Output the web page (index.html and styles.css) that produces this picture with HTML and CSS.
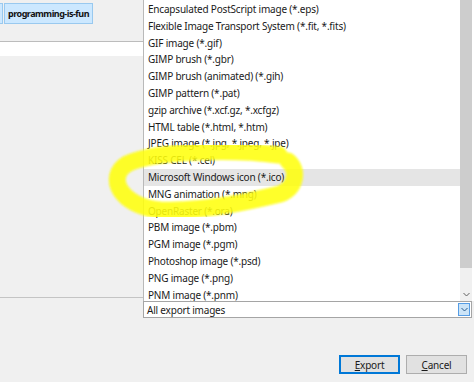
FILE: index.html
```html
<!DOCTYPE html>
<html lang="en">
<head>
  <meta charset="UTF-8" />
  <title>Export Image</title>
  <link rel="stylesheet" href="styles.css">
</head>
<body>
  <div class="dialog">
    <div class="main">

      <!-- folder path + file list (mostly hidden under the popup) -->
      <aside class="left">
        <div class="pathbar">
          <span class="crumb crumb-cut"></span>
          <span class="crumb">programming-is-fun</span>
        </div>
        <div class="file-head"></div>
        <div class="file-area"></div>
      </aside>

      <!-- file type popup -->
      <div class="chooser">
        <div class="popup">
          <ul class="types">
            <li>Encapsulated PostScript image (*.eps)</li>
            <li>Flexible Image Transport System (*.fit, *.fits)</li>
            <li>GIF image (*.gif)</li>
            <li>GIMP brush (*.gbr)</li>
            <li>GIMP brush (animated) (*.gih)</li>
            <li>GIMP pattern (*.pat)</li>
            <li>gzip archive (*.xcf.gz, *.xcfgz)</li>
            <li>HTML table (*.html, *.htm)</li>
            <li>JPEG image (*.jpg, *.jpeg, *.jpe)</li>
            <li>KISS CEL (*.cel)</li>
            <li class="hover">Microsoft Windows icon (*.ico)</li>
            <li>MNG animation (*.mng)</li>
            <li>OpenRaster (*.ora)</li>
            <li>PBM image (*.pbm)</li>
            <li>PGM image (*.pgm)</li>
            <li>Photoshop image (*.psd)</li>
            <li>PNG image (*.png)</li>
            <li>PNM image (*.pnm)</li>
          </ul>
          <div class="scrollbar">
            <div class="thumb"></div>
            <div class="arrow">
              <svg width="7" height="5" viewBox="0 0 7 5"><path d="M0.5 1 L3.5 4 L6.5 1" fill="none" stroke="#606060" stroke-width="1"/></svg>
            </div>
          </div>
        </div>
        <div class="combo">
          <span class="combo-text">All export images</span>
          <span class="combo-btn">
            <svg width="7" height="5" viewBox="0 0 7 5"><path d="M0.5 1 L3.5 4 L6.5 1" fill="none" stroke="#2a5a8a" stroke-width="1"/></svg>
          </span>
        </div>
      </div>
    </div>

    <div class="actions">
      <button class="btn btn-default"><u>E</u>xport</button>
      <button class="btn"><u>C</u>ancel</button>
    </div>

    <!-- yellow marker scribble drawn over the screenshot -->
    <svg class="marker" width="474" height="382" viewBox="0 0 474 382">
      <defs>
        <filter id="soft"><feGaussianBlur stdDeviation="1.3"/></filter>
      </defs>
      <path d="M279 155 C225 148, 150 152, 127 164 C106 177, 120 206, 160 210 C205 212, 255 200, 280 194 C296 188, 299 170, 288 161"
            fill="none" stroke="#ffff0a" stroke-width="17" stroke-linecap="round" opacity="0.88" filter="url(#soft)"/>
    </svg>
  </div>
</body>
</html>
```

FILE: styles.css
```css
body {
  margin: 0;
  background: #f0f0f0;
  font-family: 'Noto Sans', 'Open Sans', sans-serif;
  font-size: 10px;
  font-stretch: 87.5%;
  letter-spacing: -0.2px;
  color: #1a1a1a;
}

.dialog {
  position: relative;
  width: 474px;
  height: 382px;
  overflow: hidden;
}

.main {
  display: flex;
  height: 319px;
}

/* left side */
.left {
  width: 143px;
  display: flex;
  flex-direction: column;
}

.pathbar {
  height: 42px;
  box-sizing: border-box;
  border-bottom: 1px solid #bcbcbc;
  display: flex;
  align-items: flex-start;
  gap: 1px;
  padding-top: 3px;
}

.crumb {
  height: 21px;
  box-sizing: border-box;
  background: #cce8ff;
  border: 1px solid #99c9ef;
  padding: 0 3px;
  font-size: 9px;
  font-weight: 700;
  letter-spacing: -0.5px;
  line-height: 19px;
  white-space: nowrap;
  color: #111;
}

.crumb-cut {
  width: 3px;
  padding: 0;
  border-left: none;
}

.file-head {
  height: 14px;
  background: #fff;
}

.file-area {
  height: 241px;
  border-bottom: 1px solid #c4c4c4;
}

/* popup */
.chooser {
  flex: 1;
  display: flex;
  flex-direction: column;
}

.popup {
  height: 301px;
  display: flex;
  background: #fff;
  border-left: 1px solid #b9b9b9;
  padding-right: 2px;
  overflow: hidden;
}

.types {
  list-style: none;
  margin: 0;
  padding: 1px 0 0;
  flex: 1;
}

.types li {
  height: 16.8px;
  line-height: 16.8px;
  padding-left: 4px;
  white-space: nowrap;
}

.types li.hover {
  background: #e5e5e5;
}

.scrollbar {
  width: 12px;
  display: flex;
  flex-direction: column;
  background: #f0f0f0;
}

.thumb {
  height: 268px;
  background: #cdcdcd;
}

.arrow {
  margin-top: auto;
  height: 14px;
  display: flex;
  align-items: center;
  justify-content: center;
}

.combo {
  height: 17px;
  box-sizing: border-box;
  margin-right: 2px;
  border: 1px solid #a5a5a5;
  background: #fff;
  display: flex;
  align-items: center;
  justify-content: space-between;
  padding: 0 1px 0 3px;
}

.combo-btn {
  width: 12px;
  height: 13px;
  box-sizing: border-box;
  background: #cce4f7;
  border: 1px solid #569de5;
  display: flex;
  align-items: center;
  justify-content: center;
}

/* bottom buttons */
.actions {
  display: flex;
  justify-content: flex-end;
  gap: 6px;
  padding: 36px 7px 0 0;
}

.btn {
  width: 61px;
  height: 19px;
  box-sizing: border-box;
  background: #e1e1e1;
  border: 1px solid #adadad;
  font-family: inherit;
  font-size: 10px;
  font-stretch: 87.5%;
  letter-spacing: -0.2px;
  color: #1a1a1a;
  padding: 0;
}

.btn-default {
  border-color: #0078d7;
  box-shadow: inset 0 0 0 1px #0078d7;
}

.marker {
  position: absolute;
  left: 0;
  top: 0;
  pointer-events: none;
}
```
